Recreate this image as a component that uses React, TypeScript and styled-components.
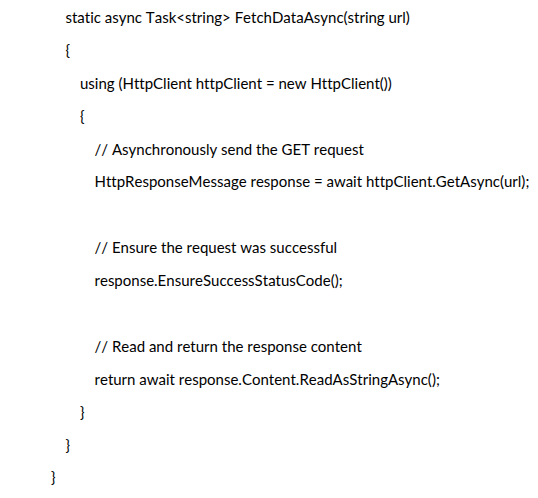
import React from "react";
import styled, { createGlobalStyle } from "styled-components";

const GlobalStyle = createGlobalStyle`
  html, body {
    margin: 0;
    padding: 0;
    background: #ffffff;
  }
`;

const Page = styled.div`
  width: 538px;
  height: 498px;
  box-sizing: border-box;
  padding: 1px 0 0 51px;
  background: #ffffff;
  display: flex;
  flex-direction: column;
  font-family: "Lato", "Open Sans", sans-serif;
  font-size: 15px;
  color: #000000;
  font-variant-ligatures: none;
  font-kerning: none;
`;

const Line = styled.div<{ $level: number }>`
  height: 32.9px;
  line-height: 32.9px;
  padding-left: ${(p) => p.$level * 14.5}px;
  white-space: pre;
`;

const lines: Array<[number, string]> = [
  [1, "static async Task<string> FetchDataAsync(string url)"],
  [1, "{"],
  [2, "using (HttpClient httpClient = new HttpClient())"],
  [2, "{"],
  [3, "// Asynchronously send the GET request"],
  [3, "HttpResponseMessage response = await httpClient.GetAsync(url);"],
  [3, ""],
  [3, "// Ensure the request was successful"],
  [3, "response.EnsureSuccessStatusCode();"],
  [3, ""],
  [3, "// Read and return the response content"],
  [3, "return await response.Content.ReadAsStringAsync();"],
  [2, "}"],
  [1, "}"],
  [0, "}"],
];

export default function App() {
  return (
    <>
      <GlobalStyle />
      <Page>
        {lines.map(([level, text], i) => (
          <Line key={i} $level={level}>
            {text}
          </Line>
        ))}
      </Page>
    </>
  );
}
